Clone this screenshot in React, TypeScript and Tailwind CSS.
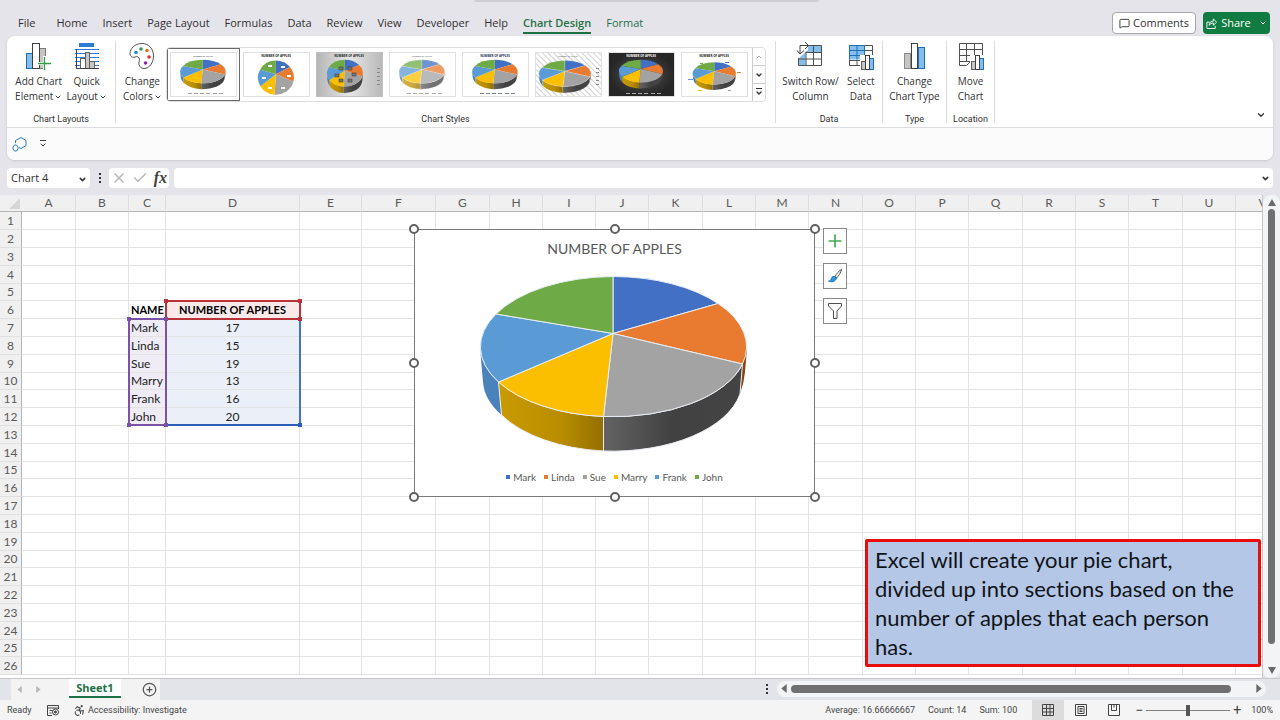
import React from "react";
import { ChevronDown, ChevronUp, MessageSquare, X, Check, Plus, CirclePlus, Accessibility } from "lucide-react";

const tabs = ["Home", "Insert", "Page Layout", "Formulas", "Data", "Review", "View", "Developer", "Help"];

const columns = [
  { name: "A", width: 54 },
  { name: "B", width: 53 },
  { name: "C", width: 37 },
  { name: "D", width: 134 },
  { name: "E", width: 62 },
  { name: "F", width: 74 },
  { name: "G", width: 54 },
  { name: "H", width: 53 },
  { name: "I", width: 53 },
  { name: "J", width: 53 },
  { name: "K", width: 54 },
  { name: "L", width: 53 },
  { name: "M", width: 53 },
  { name: "N", width: 54 },
  { name: "O", width: 53 },
  { name: "P", width: 53 },
  { name: "Q", width: 54 },
  { name: "R", width: 53 },
  { name: "S", width: 53 },
  { name: "T", width: 54 },
  { name: "U", width: 53 },
  { name: "V", width: 54 },
];

const people = [
  { name: "Mark", apples: 17, swatch: "bg-[#4170c4]" },
  { name: "Linda", apples: 15, swatch: "bg-[#e97b30]" },
  { name: "Sue", apples: 19, swatch: "bg-[#a3a3a3]" },
  { name: "Marry", apples: 13, swatch: "bg-[#fbbf00]" },
  { name: "Frank", apples: 16, swatch: "bg-[#5a9ad5]" },
  { name: "John", apples: 20, swatch: "bg-[#6eab46]" },
];

const FIRST_DATA_ROW = 7;

type PieProps = { rim?: boolean; lines?: string };

// 3D pie, drawn in a 400 x 267 box
function Pie({ rim = true, lines = "#e9eef5" }: PieProps) {
  return (
    <g strokeLinejoin="round">
      {rim && (
        <g>
          <path d="M66 118 L69 152 A130 69 0 0 0 87.500 185 L84.500 152 A133.500 70 0 0 1 66 118Z" fill="#4a83bb" />
          <path d="M333 118 L331 142 Q330 153 326 164 L328.500 134Z" fill="#8a4213" />
          <path d="M84.500 152 A133.500 70 0 0 0 189.500 186.500 L189.500 221 A130 70 0 0 1 87.500 185Z" fill="url(#goldSide)" stroke={lines} strokeWidth="1" />
          <path d="M189.500 186.500 A133.500 70 0 0 0 328.500 134 L326 164 A130 70 0 0 1 189.500 221Z" fill="url(#graySide)" stroke={lines} strokeWidth="1" />
        </g>
      )}
      <g stroke={lines} strokeWidth="1">
        <path d="M199 103.500 L199 46.500 A133.500 70 0 0 1 304 73.500Z" fill="#4170c4" />
        <path d="M199 103.500 L304 73.500 A133.500 70 0 0 1 328.500 134Z" fill="#e97b30" />
        <path d="M199 103.500 L328.500 134 A133.500 70 0 0 1 189.500 186.500Z" fill="#a3a3a3" />
        <path d="M199 103.500 L189.500 186.500 A133.500 70 0 0 1 84.500 152Z" fill="#fbbf00" />
        <path d="M199 103.500 L84.500 152 A133.500 70 0 0 1 82 84Z" fill="#5a9ad5" />
        <path d="M199 103.500 L82 84 A133.500 70 0 0 1 199 46.500Z" fill="#6eab46" />
      </g>
    </g>
  );
}

function PieDefs() {
  return (
    <svg className="absolute h-0 w-0" aria-hidden="true">
      <defs>
        <linearGradient id="goldSide">
          <stop offset="0" stopColor="#c99a00" />
          <stop offset="0.6" stopColor="#b98d00" />
          <stop offset="1" stopColor="#946f00" />
        </linearGradient>
        <linearGradient id="graySide">
          <stop offset="0" stopColor="#636363" />
          <stop offset="0.5" stopColor="#414141" />
          <stop offset="1" stopColor="#444444" />
        </linearGradient>
        <radialGradient id="darkThumb">
          <stop offset="0" stopColor="#555555" />
          <stop offset="1" stopColor="#262626" />
        </radialGradient>
        <linearGradient id="silverThumb">
          <stop offset="0" stopColor="#b5b5b5" />
          <stop offset="0.5" stopColor="#e6e6e6" />
          <stop offset="1" stopColor="#b9b9b9" />
        </linearGradient>
        <pattern id="hatch" width="4" height="4" patternUnits="userSpaceOnUse" patternTransform="rotate(-45)">
          <rect width="4" height="4" fill="#ffffff" />
          <rect width="1" height="4" fill="#d2d2d2" />
        </pattern>
      </defs>
    </svg>
  );
}

const thumbs = [
  { fill: "#ffffff", ink: "#666666", title: 2, pie: "translate(-1 0) scale(0.170 0.168)", kind: "legend" },
  { fill: "#ffffff", ink: "#222222", title: 3, pie: "translate(6 -3) scale(0.135 0.245)", kind: "flat" },
  { fill: "url(#silverThumb)", ink: "#222222", title: 3, pie: "translate(2 -1) scale(0.135 0.190)", kind: "badges" },
  { fill: "#ffffff", ink: "#777777", title: 2, pie: "translate(-1 0) scale(0.170 0.168)", kind: "faded" },
  { fill: "#ffffff", ink: "#1f2f55", title: 3, pie: "translate(-1 0) scale(0.170 0.168)", kind: "legend" },
  { fill: "url(#hatch)", ink: "#777777", title: 2, pie: "translate(-9 0) scale(0.195 0.185)", kind: "side" },
  { fill: "url(#darkThumb)", ink: "#ffffff", title: 3, pie: "translate(0 0) scale(0.165 0.165)", kind: "legend" },
  { fill: "#ffffff", ink: "#222222", title: 3, pie: "translate(1 3) scale(0.162 0.158)", kind: "callouts" },
];

function Thumb({ fill, ink, title, pie, kind }: (typeof thumbs)[number]) {
  const dots = [18, 24, 30, 36, 43, 49];
  return (
    <svg viewBox="0 0 67 45" className="h-[45px] w-[67px]">
      <rect x="0.500" y="0.500" width="66" height="44" fill={fill} stroke={kind === "badges" ? "#c0c0c0" : "#e0e0e0"} />
      <text x="33" y="5" textAnchor="middle" fontSize={title} fontWeight="700" fill={ink}>
        NUMBER OF APPLES
      </text>
      <g transform={pie} opacity={kind === "faded" ? 0.75 : 1}>
        <Pie rim={kind !== "flat"} lines={kind === "faded" || kind === "side" ? "#ffffff" : "none"} />
      </g>
      {(kind === "legend" || kind === "faded") &&
        dots.map((x) => <rect key={x} x={x} y="41" width="4" height="1" fill={ink} opacity="0.6" />)}
      {kind === "flat" &&
        [[25, 13], [38, 14], [44, 23], [38, 35], [25, 35], [19, 25]].map(([x, y]) => (
          <rect key={`${x}-${y}`} x={x} y={y} width="4" height="2" fill="#ffffff" />
        ))}
      {kind === "badges" &&
        [[23, 15], [32, 15], [19, 22], [36, 21], [23, 27], [32, 27]].map(([x, y]) => (
          <rect key={`${x}-${y}`} x={x} y={y} width="4" height="3" fill="#777777" stroke="#333333" strokeWidth="0.500" />
        ))}
      {(kind === "badges" || kind === "side") &&
        [16, 20, 24, 28, 32].map((y) => <rect key={y} x="61" y={y} width="3" height="1" fill="#8a8a8a" />)}
      {kind === "callouts" && (
        <g>
          <rect x="19" y="11" width="3" height="1" fill="#6eab46" />
          <rect x="44" y="10" width="4" height="1" fill="#4170c4" />
          <rect x="56" y="20" width="4" height="1" fill="#e97b30" />
          <rect x="7" y="27" width="5" height="1" fill="#5a9ad5" />
          <rect x="17" y="38" width="4" height="1" fill="#fbbf00" />
          <rect x="47" y="38" width="3" height="1" fill="#a3a3a3" />
        </g>
      )}
    </svg>
  );
}

const iconClass = "h-[30px] w-[30px] shrink-0";

function AddElementIcon() {
  return (
    <svg viewBox="0 0 30 30" className={iconClass}>
      <rect x="14.500" y="7.500" width="7" height="20" fill="#c8c6c4" stroke="#7a7a7a" />
      <rect x="2.500" y="12.500" width="6" height="15" fill="#83beec" stroke="#1e6fb5" />
      <rect x="8.500" y="2.500" width="7" height="25" fill="#ffffff" stroke="#404040" />
      <path d="M20.500 15v14M14 22.500h13" stroke="#ffffff" strokeWidth="3" />
      <path d="M20.500 16v13M14 22.500h13" stroke="#2f9e44" strokeWidth="1.300" />
    </svg>
  );
}

function QuickLayoutIcon() {
  return (
    <svg viewBox="0 0 30 30" className={iconClass}>
      <rect x="7" y="2" width="15" height="4" fill="#2b7cd3" />
      <path d="M3 8.500h24M3 12.500h24M3 16.500h24M3 20.500h24M3 24.500h24" stroke="#2b7cd3" />
      <path d="M4.500 8v20" stroke="#404040" />
      <rect x="8.500" y="17.500" width="5" height="10" fill="#ffffff" stroke="#606060" />
      <rect x="13.500" y="11.500" width="4" height="16" fill="#c8c6c4" stroke="#606060" />
      <rect x="17.500" y="20.500" width="5" height="7" fill="#c8c6c4" stroke="#606060" />
      <path d="M4 27.500h23" stroke="#404040" />
    </svg>
  );
}

function ColorsIcon() {
  return (
    <svg viewBox="0 0 30 30" className={iconClass}>
      <path
        d="M15 2.500C8 2.500 3 7.500 3 12.500c0 3 2.500 4.500 5 3.500s4.500 0 4.500 2.500c0 2-1 3-.5 5 .5 2.500 2.500 4 5 4 5.500 0 9.500-6 9.500-12.500 0-7-4.500-12.500-11.500-12.500Z"
        fill="#ffffff"
        stroke="#505050"
      />
      <circle cx="9" cy="11.500" r="1.800" fill="#1b87c9" />
      <circle cx="14" cy="8" r="1.800" fill="#2f9e44" />
      <circle cx="20" cy="9.500" r="1.800" fill="#e0701c" />
      <circle cx="22" cy="16" r="1.800" fill="#e03131" />
      <circle cx="18.500" cy="22" r="1.800" fill="#8e24aa" />
    </svg>
  );
}

function SmallBars() {
  return (
    <g>
      <rect x="14" y="14" width="14" height="15" fill="#ffffff" />
      <rect x="15.500" y="20.500" width="4" height="8" fill="#c8c6c4" stroke="#606060" />
      <rect x="23.500" y="17.500" width="4" height="11" fill="#83beec" stroke="#1e6fb5" />
      <rect x="19.500" y="14.500" width="4" height="14" fill="#ffffff" stroke="#404040" />
    </g>
  );
}

function SwitchIcon() {
  return (
    <svg viewBox="0 0 30 30" className={iconClass}>
      <rect x="3.500" y="4.500" width="23" height="20" fill="#ffffff" />
      <path d="M11 4.500h15.500v7H11zM3.500 11.500h7v13h-7z" fill="#83beec" />
      <path d="M3.500 4.500h23v20h-23zM3.500 11.500h23M3.500 18h23M11 4.500v20M18.500 4.500v20" fill="none" stroke="#505050" />
      <path d="M0 0h13v9L4 17H0z" fill="#ffffff" />
      <path d="M5 12.500V4.500h8M2 9.500l3 3.500 4-3.500M10 1l3.500 3.500L10 8" fill="none" stroke="#404040" />
    </svg>
  );
}

function SelectDataIcon() {
  return (
    <svg viewBox="0 0 30 30" className={iconClass}>
      <rect x="3.500" y="4.500" width="23" height="20" fill="#ffffff" />
      <rect x="3.500" y="4.500" width="15" height="14" fill="#83beec" />
      <path d="M18.500 4.500h8v20h-23v-6M18.500 9.500h8M18.500 14.500h8M3.500 19.500h23M11 19v5M18.500 19v5" fill="none" stroke="#505050" />
      <path d="M18.500 19V4.500h-15v14M3.500 9.500h15M3.500 14.500h15M11 4.500v14" fill="none" stroke="#1e6fb5" />
      <SmallBars />
    </svg>
  );
}

function ChartTypeIcon() {
  return (
    <svg viewBox="0 0 30 30" className={iconClass}>
      <rect x="4.500" y="12.500" width="6" height="15" fill="#c8c6c4" stroke="#8a8a8a" />
      <rect x="18.500" y="6.500" width="6" height="21" fill="#83beec" stroke="#1e6fb5" />
      <rect x="11.500" y="2.500" width="6" height="25" fill="#ffffff" stroke="#404040" />
    </svg>
  );
}

function MoveChartIcon() {
  return (
    <svg viewBox="0 0 30 30" className={iconClass}>
      <path d="M3.500 2.500h23v19M3.500 2.500v22h7l4-4M3.500 8.500h23M3.500 14.500h23M3.500 20.500h11M10.500 2.500v18M18.500 2.500v18" fill="none" stroke="#505050" />
      <SmallBars />
    </svg>
  );
}

type RibbonButtonProps = { icon: React.ReactNode; top: string; bottom: string; menu?: boolean };

function RibbonButton({ icon, top, bottom, menu }: RibbonButtonProps) {
  return (
    <button className="flex flex-col items-center text-[10px] leading-[15px] text-[#333333]">
      {icon}
      <span className="mt-[3px] whitespace-nowrap">{top}</span>
      <span className="flex items-center gap-px whitespace-nowrap">
        {bottom}
        {menu && <ChevronDown size={8} strokeWidth={3} />}
      </span>
    </button>
  );
}

type GroupProps = { label: string; className: string; children: React.ReactNode };

function Group({ label, className, children }: GroupProps) {
  return (
    <section aria-label={label} className={`flex h-[82px] shrink-0 flex-col justify-between border-r border-[#dcdcdc] ${className}`}>
      <div className="flex justify-center">{children}</div>
      <div className="text-center font-['Roboto',sans-serif] text-[9px] leading-[8px] text-[#333333]">{label}</div>
    </section>
  );
}

function Ribbon() {
  return (
    <div className="mx-[7px] shrink-0 overflow-hidden rounded-lg bg-white shadow-sm">
      <div className="flex h-[92px] items-start border-b border-[#dcdcdc] pt-[5px]">
        <Group label="Chart Layouts" className="w-[109px]">
          <div className="flex gap-[4px]">
            <RibbonButton icon={<AddElementIcon />} top="Add Chart" bottom="Element" menu />
            <RibbonButton icon={<QuickLayoutIcon />} top="Quick" bottom="Layout" menu />
          </div>
        </Group>
        <Group label="Chart Styles" className="w-[660px]">
          <div className="flex w-full items-start pl-[7px]">
            <RibbonButton icon={<ColorsIcon />} top="Change" bottom="Colors" menu />
            <div className="mt-[6px] mr-[9px] ml-auto flex h-[55px] w-[600px] overflow-hidden rounded border border-[#dddddd]">
              <div className="flex">
                {thumbs.map((t, i) => (
                  <button
                    key={i}
                    aria-label={`Style ${i + 1}`}
                    className={`flex w-[73px] items-center justify-center border ${i === 0 ? "border-[#6b6b6b]" : "border-transparent"}`}
                  >
                    <Thumb {...t} />
                  </button>
                ))}
              </div>
              <div className="ml-px flex flex-1 flex-col divide-y divide-[#cccccc] border-l border-[#cccccc] text-[#333333]">
                <button aria-label="Previous styles" className="flex flex-1 items-center justify-center text-[#aaaaaa]">
                  <ChevronUp size={8} strokeWidth={3} />
                </button>
                <button aria-label="Next styles" className="flex flex-1 items-center justify-center">
                  <ChevronDown size={8} strokeWidth={4} />
                </button>
                <button aria-label="More styles" className="flex flex-1 flex-col items-center justify-center">
                  <span className="h-px w-[6px] bg-[#333333]" />
                  <ChevronDown size={8} strokeWidth={4} />
                </button>
              </div>
            </div>
          </div>
        </Group>
        <Group label="Data" className="w-[107px]">
          <div className="flex gap-[7px]">
            <RibbonButton icon={<SwitchIcon />} top="Switch Row/" bottom="Column" />
            <RibbonButton icon={<SelectDataIcon />} top="Select" bottom="Data" />
          </div>
        </Group>
        <Group label="Type" className="w-[64px]">
          <RibbonButton icon={<ChartTypeIcon />} top="Change" bottom="Chart Type" />
        </Group>
        <Group label="Location" className="w-[48px]">
          <RibbonButton icon={<MoveChartIcon />} top="Move" bottom="Chart" />
        </Group>
        <button aria-label="Collapse ribbon" className="mr-[7px] mb-[7px] ml-auto self-end">
          <ChevronDown size={10} strokeWidth={3} />
        </button>
      </div>
      <div className="flex h-[32px] items-center gap-[9px] bg-[#fbfbfb] pl-[5px]">
        <button aria-label="Shapes">
          <svg viewBox="0 0 16 16" className="h-[16px] w-[16px]" fill="none" stroke="#2b7cb8">
            <path d="M3.500 7 V4.500 L9 1.500 L14 4.500 V9.500 L9 12.500 L7 11.500" />
            <path d="M1 11 L2.500 9 H4.500 L6 11 V13 L4.500 15 H2.500 L1 13Z" />
          </svg>
        </button>
        <button aria-label="Customize toolbar" className="flex w-[12px] flex-col items-center">
          <span className="h-px w-[6px] bg-[#444444]" />
          <ChevronDown size={8} strokeWidth={3} />
        </button>
      </div>
    </div>
  );
}

function Dots() {
  return (
    <svg viewBox="0 0 4 12" className="h-[12px] w-[4px]" fill="#333333">
      <rect x="1" y="1" width="2" height="2" />
      <rect x="1" y="5" width="2" height="2" />
      <rect x="1" y="9" width="2" height="2" />
    </svg>
  );
}

function FormulaBar() {
  return (
    <div className="mx-[7px] mt-[8px] mb-[7px] flex h-[20px] shrink-0 items-stretch">
      <div className="relative w-[83px]">
        <select aria-label="Name box" className="block h-full w-full appearance-none rounded bg-white pl-[4px] text-[11px] leading-[20px] text-[#333333]">
          <option>Chart 4</option>
        </select>
        <ChevronDown size={9} strokeWidth={4} className="pointer-events-none absolute top-[7px] right-[3px]" />
      </div>
      <div className="flex w-[19px] items-center justify-center">
        <Dots />
      </div>
      <div className="flex w-[60px] items-center justify-between rounded bg-white px-[2px]">
        <button aria-label="Cancel" className="text-[#b5b5b5]">
          <X size={16} strokeWidth={2} />
        </button>
        <button aria-label="Enter" className="text-[#b5b5b5]">
          <Check size={16} strokeWidth={2} />
        </button>
        <button aria-label="Insert function" className="font-['Liberation_Serif',serif] text-[16px] leading-[18px] font-bold text-[#404040] italic">
          fx
        </button>
      </div>
      <div className="relative ml-[5px] flex-1">
        <input aria-label="Formula bar" className="block h-full w-full rounded bg-white px-[6px] text-[11px]" />
        <ChevronDown size={9} strokeWidth={4} className="pointer-events-none absolute top-[6px] right-[3px]" />
      </div>
    </div>
  );
}

function cellContent(row: number, col: string) {
  const person = people[row - FIRST_DATA_ROW];
  if (col === "C") return row === 6 ? "NAME" : person?.name;
  if (col === "D") return row === 6 ? "NUMBER OF APPLES" : person?.apples;
  return undefined;
}

function cellStyle(row: number, col: string) {
  const inData = row >= FIRST_DATA_ROW && row < FIRST_DATA_ROW + people.length;
  if (row === 6 && col === "C") return "pl-[2px] text-[11px] font-bold text-black";
  if (row === 6 && col === "D") return "bg-[#fae9e9] text-center text-[11px] font-bold text-black";
  if (inData && col === "C") return "bg-[#f0ecf6] pl-[2px]";
  if (inData && col === "D") return "bg-[#eaeff8] text-center";
  return "";
}

function Grid() {
  return (
    <table className="w-[1290px] table-fixed border-separate border-spacing-0 font-['Lato',sans-serif] text-[12px] text-[#222222]">
      <colgroup>
        <col className="w-[22px]" />
        {columns.map((c) => (
          <col key={c.name} style={{ width: c.width }} />
        ))}
      </colgroup>
      <thead>
        <tr className="h-[17px] bg-[#f0f0f0] text-[12px] leading-[16px] text-[#5a5a5a]">
          <th className="border-b border-[#b5b5b5] p-0">
            <svg viewBox="0 0 22 16" className="h-[16px] w-[22px]">
              <path d="M20 3v11H9z" fill="#d6d6d6" />
            </svg>
          </th>
          {columns.map((c) => (
            <th key={c.name} scope="col" className="border-r border-b border-r-[#dcdcdc] border-b-[#b5b5b5] p-0 font-normal">
              {c.name}
            </th>
          ))}
        </tr>
      </thead>
      <tbody>
        {Array.from({ length: 26 }, (_, i) => i + 1).map((row) => (
          <tr key={row} className={row % 5 === 0 ? "h-[17px]" : "h-[18px]"}>
            <th scope="row" className="border-r border-b border-r-[#b5b5b5] border-b-[#e0e0e0] bg-[#f0f0f0] p-0 text-[12px] leading-[16px] font-normal text-[#5a5a5a]">
              {row}
            </th>
            {columns.map((c) => (
              <td key={c.name} className={`border-r border-b border-[#e3e3e3] p-0 leading-[16px] whitespace-nowrap ${cellStyle(row, c.name)}`}>
                {cellContent(row, c.name)}
              </td>
            ))}
          </tr>
        ))}
      </tbody>
    </table>
  );
}

// coloured range outlines laid over the cells that feed the chart
function RangeOutlines() {
  return (
    <svg viewBox="0 0 176 130" className="pointer-events-none absolute top-[104px] left-[126px] h-[130px] w-[176px]">
      <g fill="none" strokeWidth="2">
        <path d="M40 126h134" stroke="#2f5eb8" />
        <path d="M174 20v106" stroke="#4472c4" />
        <path d="M3 20h37v106H3z" stroke="#7c52a8" />
        <path d="M40 2h134v18H40z" stroke="#b83238" />
      </g>
      <g fill="#b83238">
        <rect x="38" y="0" width="4" height="4" />
        <rect x="172" y="0" width="4" height="4" />
        <rect x="172" y="18" width="4" height="4" />
      </g>
      <g fill="#7c52a8">
        <rect x="1" y="18" width="4" height="4" />
        <rect x="38" y="18" width="4" height="4" />
        <rect x="1" y="124" width="4" height="4" />
        <rect x="38" y="124" width="4" height="4" />
      </g>
      <rect x="172" y="124" width="4" height="4" fill="#2f5eb8" />
    </svg>
  );
}

const handles = [
  "-left-[6px] -top-[6px]",
  "left-[195px] -top-[6px]",
  "-right-[6px] -top-[6px]",
  "-left-[6px] top-[128px]",
  "-right-[6px] top-[128px]",
  "-left-[6px] -bottom-[6px]",
  "left-[195px] -bottom-[6px]",
  "-right-[6px] -bottom-[6px]",
];

function ChartObject() {
  return (
    <div className="absolute top-[34px] left-[414px] flex h-[268px] w-[401px] flex-col items-center border border-[#7a7a7a] bg-white font-['Lato',sans-serif]">
      <h2 className="mt-[9px] text-[14px] leading-[20px] text-[#595959]">NUMBER OF APPLES</h2>
      <svg viewBox="1 29 400 196" className="-mb-[7px] h-[196px] w-[400px] shrink-0" role="img" aria-label="Pie chart of number of apples">
        <Pie />
      </svg>
      <ul className="mt-auto mb-[11px] flex gap-[8px] text-[10px] leading-[16px] text-[#595959]">
        {people.map((p) => (
          <li key={p.name} className="flex items-center gap-[3px]">
            <span className={`h-[4px] w-[4px] ${p.swatch}`} />
            {p.name}
          </li>
        ))}
      </ul>
      {handles.map((h) => (
        <span key={h} className={`absolute h-[10px] w-[10px] rounded-full border-2 border-[#606060] bg-white ${h}`} />
      ))}
    </div>
  );
}

function ChartTools() {
  const box = "flex h-[26px] w-[24px] items-center justify-center border border-[#8a8a8a] bg-white";
  return (
    <div className="absolute top-[33px] left-[823px] flex flex-col gap-[9px]">
      <button aria-label="Chart elements" className={box}>
        <Plus size={20} strokeWidth={2} className="text-[#43a857]" />
      </button>
      <button aria-label="Chart styles" className={box}>
        <svg viewBox="0 0 16 16" className="h-[16px] w-[16px]">
          <path d="M14.500 1.500c-2 1-5 4-6.500 7l1.500 1.500c2-2 4.500-5.500 5-8.500Z" fill="#ffffff" stroke="#505050" />
          <path d="M7.500 8.500C5 8 4.500 10 4 11.500c-.5 1-1.500 1.500-2.500 1.500 2.500 1.500 7 1 8-3Z" fill="#2b9be0" stroke="#1e6fb5" />
        </svg>
      </button>
      <button aria-label="Chart filters" className={box}>
        <svg viewBox="0 0 16 18" className="h-[18px] w-[16px]">
          <path d="M1.500 1.500h13v2.500L10 9v7.500H6.500V9L1.500 4z" fill="none" stroke="#505050" />
        </svg>
      </button>
    </div>
  );
}

function SheetTabs() {
  return (
    <div className="flex h-[22px] shrink-0 items-stretch border-t border-[#c6c6c6] bg-[#e3e4ea]">
      <div className="ml-[11px] flex w-[149px] items-stretch bg-[#f3f3f3]">
        <div className="flex w-[58px] items-center gap-[12px] pl-[6px]">
          <button aria-label="Previous sheet">
            <svg viewBox="0 0 6 8" className="h-[7px] w-[6px]"><path d="M5 0v8L0 4z" fill="#b8b8b8" /></svg>
          </button>
          <button aria-label="Next sheet">
            <svg viewBox="0 0 6 8" className="h-[7px] w-[6px]"><path d="M1 0v8l5-4z" fill="#b8b8b8" /></svg>
          </button>
        </div>
        <button className="mb-[2px] w-[52px] border-b-2 border-[#1e7145] bg-white text-[11px] leading-[16px] font-bold text-[#1e7145]">Sheet1</button>
        <button aria-label="New sheet" className="flex flex-1 items-center justify-center pl-[18px] text-[#555555]">
          <CirclePlus size={15} strokeWidth={2} />
        </button>
      </div>
      <div className="mr-[14px] ml-auto flex items-center gap-[8px] pb-[2px]">
        <Dots />
        <div className="flex h-[16px] w-[489px] items-center gap-[4px] rounded-lg bg-[#f3f4f5] pl-[4px]">
          <svg viewBox="0 0 6 10" className="h-[9px] w-[6px]"><path d="M6 0v10L0 5z" fill="#6a6a6a" /></svg>
          <div className="h-[8px] w-[440px] rounded bg-[#707070]" />
          <svg viewBox="0 0 6 10" className="mr-[4px] ml-auto h-[9px] w-[6px]"><path d="M0 0v10l6-5z" fill="#6a6a6a" /></svg>
        </div>
      </div>
    </div>
  );
}

function StatusBar() {
  return (
    <footer className="flex h-[20px] shrink-0 items-center bg-[#f4f4f4] font-['Roboto',sans-serif] text-[9px] leading-[12px] text-[#444444]">
      <span className="ml-[7px] w-[39px]">Ready</span>
      <svg viewBox="0 0 14 12" className="h-[12px] w-[14px]" fill="none" stroke="#444444">
        <path d="M6 11.500H1.500v-10h11V5M1.500 4h11M3.500 6.500h3M3.500 9h2" />
        <circle cx="9.500" cy="8" r="3" />
        <circle cx="9.500" cy="8" r="1" fill="#444444" />
      </svg>
      <button className="ml-[13px] flex items-center gap-[2px]">
        <Accessibility size={13} strokeWidth={2} />
        Accessibility: Investigate
      </button>
      <div className="ml-auto flex h-full items-center">
        <div className="flex gap-[13px] pr-[15px]">
          <span>Average: 16.66666667</span>
          <span>Count: 14</span>
          <span>Sum: 100</span>
        </div>
        <button aria-label="Normal view" className="flex h-full w-[32px] items-center justify-center bg-[#dcdcdc]">
          <svg viewBox="0 0 12 12" className="h-[12px] w-[12px]" fill="none" stroke="#444444">
            <path d="M.5.5h11v11H.5zM.5 4.500h11M.5 8h11M4.500.5v11M8 .5v11" />
          </svg>
        </button>
        <button aria-label="Page layout view" className="flex h-full w-[33px] items-center justify-center">
          <svg viewBox="0 0 12 12" className="h-[12px] w-[12px]" fill="none" stroke="#444444">
            <path d="M.5.5h11v11H.5zM3 2.500h6v7H3zM4.500 4.500h3M4.500 6h3M4.500 7.500h3" />
          </svg>
        </button>
        <button aria-label="Page break view" className="flex h-full w-[33px] items-center justify-center">
          <svg viewBox="0 0 12 12" className="h-[12px] w-[12px]" fill="none" stroke="#444444">
            <path d="M.5.5h11v11H.5zM3.500.5v6h5v-6M6 .5v3" />
          </svg>
        </button>
        <button aria-label="Zoom out" className="ml-[5px] w-[8px] text-[14px]">−</button>
        <input
          type="range"
          aria-label="Zoom"
          defaultValue="50"
          className="mx-[3px] h-[12px] w-[84px] appearance-none bg-transparent [&::-webkit-slider-runnable-track]:h-px [&::-webkit-slider-runnable-track]:bg-[#808080] [&::-webkit-slider-thumb]:-mt-[5px] [&::-webkit-slider-thumb]:h-[11px] [&::-webkit-slider-thumb]:w-[4px] [&::-webkit-slider-thumb]:appearance-none [&::-webkit-slider-thumb]:bg-[#555555]"
        />
        <button aria-label="Zoom in" className="w-[8px] text-[14px]">+</button>
        <span className="mr-[7px] ml-[10px]">100%</span>
      </div>
    </footer>
  );
}

export default function App() {
  return (
    <div className="flex h-screen flex-col overflow-hidden bg-[#e6e4eb] font-['Open_Sans','Noto_Sans',sans-serif] text-[#333333]">
      <PieDefs />
      <header className="relative flex h-[36px] shrink-0 items-end pr-[10px] pb-[2px] pl-[18px]">
        <div className="absolute top-0 left-[474px] h-[2px] w-[345px] rounded-b bg-[#cfcdd4]" />
        <nav className="flex gap-[15px] text-[11px] leading-[18px] text-[#303030]">
          <a href="#file" className="mr-[6px] pb-[2px]">File</a>
          {tabs.map((tab) => (
            <a key={tab} href={`#${tab}`} className="pb-[2px] whitespace-nowrap">{tab}</a>
          ))}
          <a href="#design" className="border-b-2 border-[#1e7145] font-semibold whitespace-nowrap text-[#1e7145]">Chart Design</a>
          <a href="#format" className="pb-[2px] text-[#1e7145]">Format</a>
        </nav>
        <div className="ml-auto flex gap-[7px] text-[11px]">
          <button className="flex h-[22px] w-[84px] items-center justify-center gap-[3px] rounded border border-[#a8a8a8] bg-white whitespace-nowrap">
            <MessageSquare size={11} strokeWidth={2} />
            Comments
          </button>
          <button className="flex h-[22px] w-[67px] items-center justify-center gap-[4px] rounded bg-[#107c41] text-white">
            <svg viewBox="0 0 12 12" className="h-[11px] w-[11px]" fill="none" stroke="currentColor">
              <path d="M4 4.500H1v7h9v-3M3.500 8c0-3 1.500-4.500 4.500-4.500V1l3.500 3.500L8 8V5.500C6 5.500 4.500 6 3.500 8Z" />
            </svg>
            Share
            <ChevronDown size={8} strokeWidth={3} className="ml-[4px]" />
          </button>
        </div>
      </header>
      <Ribbon />
      <FormulaBar />
      <main className="flex min-h-0 flex-1">
        <div className="relative min-w-0 flex-1 overflow-hidden border-r border-[#c6c6c6] bg-white">
          <Grid />
          <RangeOutlines />
          <ChartObject />
          <ChartTools />
          <aside className="absolute right-px bottom-[11px] w-[396px] rounded-xs border-3 border-[#e80c0c] bg-[#b4c7e7] px-[7px] py-[3px] font-['Lato',sans-serif] text-[22px] leading-[29px] text-[#101418] [font-variant-ligatures:none]">
            <p>
              Excel will create your pie chart,
              <br />
              divided up into sections based on the
              <br />
              number of apples that each person
              <br />
              has.
            </p>
          </aside>
        </div>
        <div className="flex w-[17px] shrink-0 flex-col items-center gap-[3px] rounded-lg bg-[#f3f4f5] py-[4px]">
          <svg viewBox="0 0 8 7" className="h-[7px] w-[8px]"><path d="M0 7h8L4 0z" fill="#6a6a6a" /></svg>
          <div className="mb-[20px] w-[7px] flex-1 rounded bg-[#707070]" />
          <svg viewBox="0 0 8 7" className="h-[7px] w-[8px]"><path d="M0 0h8L4 7z" fill="#6a6a6a" /></svg>
        </div>
      </main>
      <SheetTabs />
      <StatusBar />
    </div>
  );
}
